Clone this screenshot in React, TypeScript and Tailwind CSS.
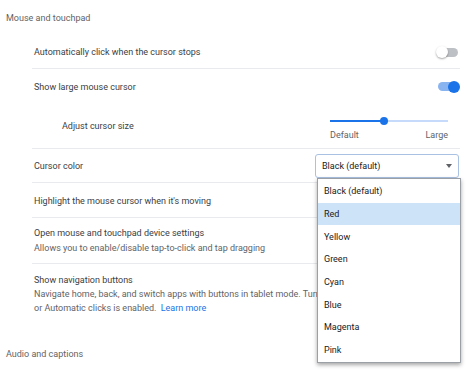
import { ReactNode } from "react";

const colors = [
  "Black (default)",
  "Red",
  "Yellow",
  "Green",
  "Cyan",
  "Blue",
  "Magenta",
  "Pink",
];

function Toggle({ on }: { on: boolean }) {
  return (
    <div className="relative w-[22px] h-[12px] flex items-center">
      <div
        className={
          "w-[20px] h-[9px] rounded-full ml-[1px] " +
          (on ? "bg-[#8ab4f0]" : "bg-[#bdc1c6]")
        }
      />
      <div
        className={
          "absolute top-[0px] w-[12px] h-[12px] rounded-full " +
          (on
            ? "left-[11px] bg-[#1a73e8]"
            : "left-[-1px] bg-white shadow-[0_1px_2px_rgba(0,0,0,0.35)]")
        }
      />
    </div>
  );
}

function Row({
  children,
  h,
  border = true,
  top = false,
}: {
  children: ReactNode;
  h: string;
  border?: boolean;
  top?: boolean;
}) {
  return (
    <div
      className={
        "flex pr-[1px] " +
        (top ? "items-start pt-[9px] " : "items-center ") +
        h +
        (border ? " border-b border-[#e8eaed]" : "")
      }
    >
      {children}
    </div>
  );
}

export default function App() {
  return (
    <div
      className="relative w-[474px] h-[370px] bg-white overflow-hidden text-[9px] leading-[14px] text-[#3c4043]"
      style={{ fontFamily: "Roboto, 'Liberation Sans', sans-serif" }}
    >
      <div className="h-[36px] flex items-center pl-[6px] text-[#5f6368]">
        Mouse and touchpad
      </div>

      <div className="ml-[32px] mr-[14px] flex flex-col">
        <Row h="h-[33px]">
          <span className="pl-[2px] flex-1">Automatically click when the cursor stops</span>
          <Toggle on={false} />
        </Row>
        <Row h="h-[35px]" border={false}>
          <span className="pl-[2px] flex-1">Show large mouse cursor</span>
          <Toggle on={true} />
        </Row>
        <Row h="h-[45px]">
          <span className="pl-[30px] flex-1 pt-[0px]">Adjust cursor size</span>
          <div className="w-[118px] flex flex-col mr-[11px] pt-[6px]">
            <div className="relative h-[8px] flex items-center">
              <div className="h-[2px] w-[55px] bg-[#1a73e8]" />
              <div className="h-[2px] flex-1 bg-[#c6dafc]" />
              <div className="absolute left-[50px] top-[0px] w-[8px] h-[8px] rounded-full bg-[#1a73e8]" />
            </div>
            <div className="flex justify-between mt-[3px] text-[#5f6368]">
              <span>Default</span>
              <span>Large</span>
            </div>
          </div>
        </Row>
        <Row h="h-[34px]">
          <span className="pl-[2px] flex-1">Cursor color</span>
          <div className="w-[144px] h-[24px] mt-[1px] border border-[#a9c1e2] rounded-[3px] flex items-center justify-between px-[6px] text-[#202124]">
            <span>Black (default)</span>
            <span className="w-0 h-0 border-l-[3.5px] border-r-[3.5px] border-t-[4px] border-l-transparent border-r-transparent border-t-[#5f6368]" />
          </div>
        </Row>
        <Row h="h-[35px]">
          <span className="pl-[2px] flex-1 pt-[2px]">Highlight the mouse cursor when it's moving</span>
        </Row>
        <Row h="h-[46px]">
          <div className="pl-[2px] flex flex-col gap-[1px]">
            <span>Open mouse and touchpad device settings</span>
            <span className="text-[#5f6368]">
              Allows you to enable/disable tap-to-click and tap dragging
            </span>
          </div>
        </Row>
        <Row h="h-[58px]" border={false} top>
          <div className="pl-[2px] flex flex-col whitespace-nowrap">
            <span>Show navigation buttons</span>
            <span className="text-[#5f6368]">
              Navigate home, back, and switch apps with buttons in tablet mode. Turn on when ChromeVox
            </span>
            <span className="text-[#5f6368]">
              or Automatic clicks is enabled.{" "}
              <span className="text-[#1a73e8] ml-[2px]">Learn more</span>
            </span>
          </div>
        </Row>
      </div>

      <div className="mt-[25px] pl-[6px] text-[#5f6368]">Audio and captions</div>

      <div className="absolute left-[317px] top-[178px] w-[144px] h-[185px] bg-white border border-[#9aa0a6] shadow-[0_2px_4px_rgba(0,0,0,0.35)] flex flex-col pt-[1px] text-[#202124]">
        {colors.map((c) => (
          <div
            key={c}
            className={
              "h-[22.7px] flex items-center px-[6px] " +
              (c === "Red" ? "bg-[#cde3f8]" : "")
            }
          >
            {c}
          </div>
        ))}
      </div>
    </div>
  );
}
